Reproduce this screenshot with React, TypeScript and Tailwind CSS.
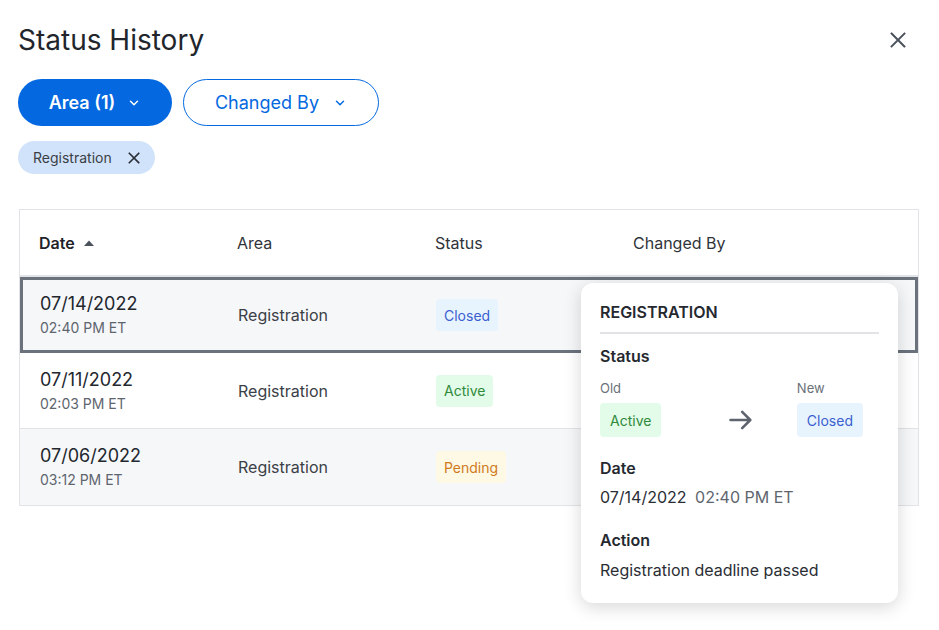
import React from "react";

const font = { fontFamily: "Inter, 'Noto Sans', sans-serif" };

function Chevron({ className }: { className?: string }) {
  return (
    <svg className={className} width="14" height="14" viewBox="0 0 24 24" fill="none" stroke="currentColor" strokeWidth="2.5" strokeLinecap="round" strokeLinejoin="round">
      <path d="M6 9l6 6 6-6" />
    </svg>
  );
}

function XIcon({ size, className, sw = 2 }: { size: number; className?: string; sw?: number }) {
  return (
    <svg className={className} width={size} height={size} viewBox="0 0 24 24" fill="none" stroke="currentColor" strokeWidth={sw} strokeLinecap="square">
      <path d="M5 5l14 14M19 5L5 19" />
    </svg>
  );
}

function Badge({ kind }: { kind: "Closed" | "Active" | "Pending" }) {
  const cls =
    kind === "Closed"
      ? "bg-[#e7f3fd] text-[#3b5fd0]"
      : kind === "Active"
      ? "bg-[#e3fbe9] text-[#2f8a3a]"
      : "bg-[#fef9e4] text-[#d07a1c]";
  return <span className={`inline-flex h-[32px] items-center rounded-[4px] px-[8px] text-[14px] ${cls}`}>{kind}</span>;
}

const rows = [
  { d: "07/14/2022", t: "02:40 PM ET", s: "Closed" as const, bg: "bg-[#f6f7f9]", sel: true },
  { d: "07/11/2022", t: "02:03 PM ET", s: "Active" as const, bg: "bg-white", sel: false },
  { d: "07/06/2022", t: "03:12 PM ET", s: "Pending" as const, bg: "bg-[#f6f7f9]", sel: false },
];

export default function App() {
  return (
    <div className="relative h-[630px] w-[939px] bg-white text-[#23272e]" style={font}>
      <div className="flex items-center justify-between pl-[18px] pr-[30px] pt-[22px]">
        <h1 className="text-[28px] leading-[36px] font-normal text-[#22262c]">Status History</h1>
        <XIcon size={22} className="text-[#4b525b]" sw={2.2} />
      </div>
      <div className="mt-[21px] flex gap-[11px] pl-[18px]">
        <button className="flex h-[47px] w-[154px] items-center justify-center gap-[12px] rounded-full bg-[#0469e0] text-[18px] font-semibold text-white">
          Area (1)
          <Chevron />
        </button>
        <button className="flex h-[47px] w-[196px] items-center justify-center gap-[14px] rounded-full border border-[#0469e0] bg-white text-[18px] text-[#0469e0]">
          Changed By
          <Chevron />
        </button>
      </div>
      <div className="mt-[15px] pl-[18px]">
        <span className="inline-flex h-[33px] items-center gap-[14px] rounded-full bg-[#d1e3fa] pl-[15px] pr-[13px] text-[14px] text-[#3a3f46]">
          Registration
          <XIcon size={16} className="text-[#2a2e34]" sw={2.4} />
        </span>
      </div>
      <div className="ml-[19px] mt-[35px] w-[900px] border border-[#e1e3e6]">
        <div className="flex h-[67px] items-center border-b-2 border-[#e1e3e6] text-[16px]">
          <div className="flex w-[198px] items-center gap-[8px] pl-[19px] font-semibold text-[#1f2329]">
            Date
            <svg width="12" height="8" viewBox="0 0 12 8"><path d="M1 7L6 1.5 11 7z" fill="#4b525b" /></svg>
          </div>
          <div className="w-[198px] pl-[19px] text-[#30343a]">Area</div>
          <div className="w-[198px] pl-[19px] text-[#30343a]">Status</div>
          <div className="pl-[19px] text-[#30343a]">Changed By</div>
        </div>
        {rows.map((r, i) => (
          <div
            key={i}
            className={`flex h-[76px] items-center ${r.bg} ${r.sel ? "border-[3px] border-[#6b727c]" : i === 1 ? "border-b border-[#e1e3e6]" : ""}`}
          >
            <div className={`flex flex-col ${r.sel ? "w-[195px] pl-[17px]" : "w-[198px] pl-[20px]"}`}>
              <span className="text-[18px] leading-[26px] text-[#23272e]">{r.d}</span>
              <span className="text-[14px] leading-[22px] text-[#5e656e]">{r.t}</span>
            </div>
            <div className="w-[198px] pl-[20px] text-[16px] text-[#3b4047]">Registration</div>
            <div className="w-[198px] pl-[20px]">
              <Badge kind={r.s} />
            </div>
          </div>
        ))}
      </div>
      <div className="absolute left-[581px] top-[283px] w-[317px] rounded-[12px] bg-white px-[19px] pb-[22px] pt-[19px] shadow-[0_4px_18px_rgba(0,0,0,0.16)]">
        <div className="text-[16px] font-semibold leading-[20px] text-[#25292f]">REGISTRATION</div>
        <div className="mt-[10px] h-[2px] bg-[#e1e3e6]" />
        <div className="mt-[11px] text-[16px] font-semibold leading-[22px] text-[#25292f]">Status</div>
        <div className="mt-[12px] flex items-end justify-between pr-[16px]">
          <div className="flex flex-col gap-[6px]">
            <span className="text-[13px] leading-[18px] text-[#6a7079]">Old</span>
            <span className="inline-flex h-[34px] items-center rounded-[4px] bg-[#e3fbe9] px-[10px] text-[14px] text-[#2f8a3a]">Active</span>
          </div>
          <svg width="30" height="28" viewBox="0 0 24 24" fill="none" stroke="#5d646d" strokeWidth="2.2" strokeLinecap="round" strokeLinejoin="round" className="mb-[3px] ml-[24px]">
            <path d="M3 12h17M13 5l7 7-7 7" />
          </svg>
          <div className="flex flex-col gap-[6px]">
            <span className="text-[13px] leading-[18px] text-[#6a7079]">New</span>
            <span className="inline-flex h-[34px] items-center rounded-[4px] bg-[#e7f3fd] px-[10px] text-[14px] text-[#3b5fd0]">Closed</span>
          </div>
        </div>
        <div className="mt-[20px] text-[16px] font-semibold leading-[22px] text-[#25292f]">Date</div>
        <div className="mt-[7px] text-[16px] leading-[22px] text-[#2a2e34]">
          07/14/2022 <span className="ml-[4px] text-[#5e656e]">02:40 PM ET</span>
        </div>
        <div className="mt-[21px] text-[16px] font-semibold leading-[22px] text-[#25292f]">Action</div>
        <div className="mt-[8px] text-[16px] leading-[22px] text-[#2a2e34]">Registration deadline passed</div>
      </div>
    </div>
  );
}
